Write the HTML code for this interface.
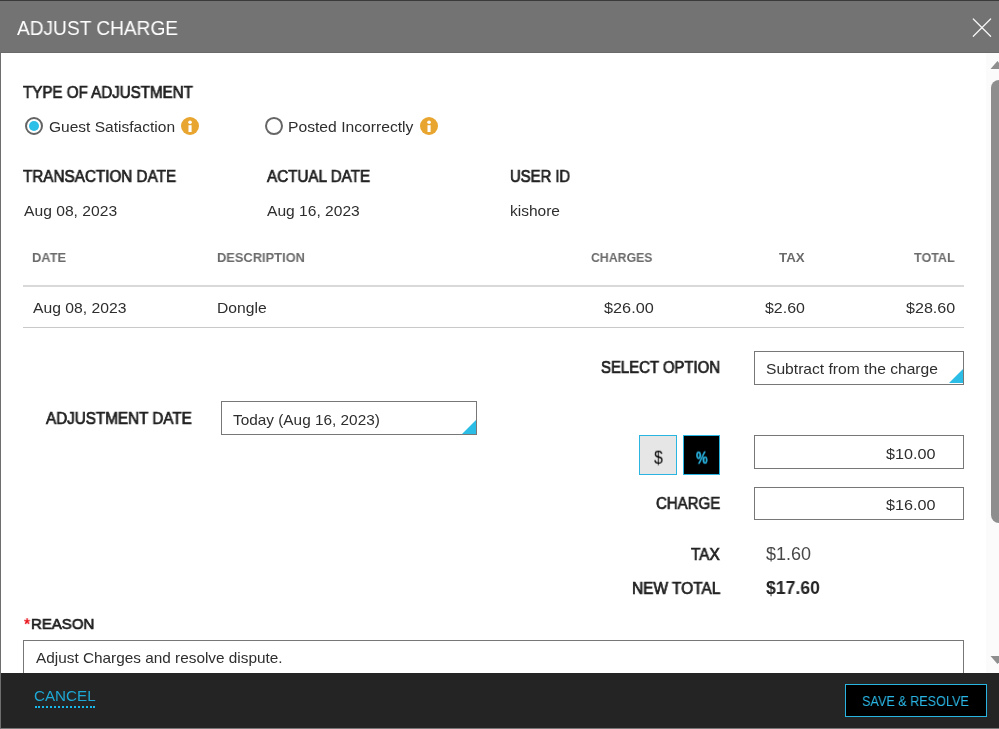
<!DOCTYPE html>
<html><head><meta charset="utf-8"><style>
*{box-sizing:border-box}
html,body{margin:0;padding:0;width:999px;height:729px;overflow:hidden;background:#fff;font-family:"Liberation Sans",sans-serif}
.t{position:absolute;white-space:pre;line-height:0;font-family:"Liberation Sans",sans-serif;transform-origin:0 0;will-change:transform}
.b{position:absolute}
</style></head><body>
<div class="b" style="left:0;top:0;width:999px;height:53px;background:#737373;border-top:1px solid #3a3a3a"></div>
<div class="b" style="left:0;top:52px;width:999px;height:1px;background:#6a6a6a"></div>
<div class="b" style="left:0;top:53px;width:1px;height:676px;background:#6e6e6e"></div>
<svg class="b" style="left:970px;top:15px" width="24" height="25" viewBox="0 0 24 25"><path d="M3.3 4 L20.6 21.3 M20.6 4 L3.3 21.3" stroke="#f6f6f6" stroke-width="1.25" stroke-linecap="round"/></svg>
<div class="b" style="left:986px;top:53px;width:13px;height:620px;background:#fbfbfb"></div>
<svg class="b" style="left:986px;top:53px" width="13" height="619"><path d="M4.5 16 L11.5 8 L18.5 16 Z" fill="#8e8e8e"/><path d="M4.5 603 L11.5 611 L18.5 603 Z" fill="#8e8e8e"/></svg>
<div class="b" style="left:991px;top:80px;width:16px;height:443px;background:#8e8e8e;border-radius:8px"></div>
<div class="b" style="left:25px;top:117px;width:18.3px;height:18.3px;border:2.6px solid #646464;border-radius:50%"></div>
<div class="b" style="left:29.3px;top:121.3px;width:10px;height:10px;background:#2cbfe7;border-radius:50%"></div>
<div class="b" style="left:265px;top:117px;width:17.8px;height:17.8px;border:2.4px solid #666;border-radius:50%"></div>
<svg class="b" style="left:181px;top:117px" width="18" height="18" viewBox="0 0 18 18"><circle cx="9" cy="9" r="9" fill="#e8a530"/><rect x="7.5" y="8.2" width="3.1" height="6.8" fill="#fff"/><circle cx="9.05" cy="5.2" r="1.8" fill="#fff"/></svg>
<svg class="b" style="left:420px;top:117px" width="18" height="18" viewBox="0 0 18 18"><circle cx="9" cy="9" r="9" fill="#e8a530"/><rect x="7.5" y="8.2" width="3.1" height="6.8" fill="#fff"/><circle cx="9.05" cy="5.2" r="1.8" fill="#fff"/></svg>
<div class="b" style="left:23px;top:285px;width:941px;height:2px;background:#d9d9d9"></div>
<div class="b" style="left:23px;top:327px;width:941px;height:1px;background:#c9c9c9"></div>
<div class="b" style="left:754px;top:351px;width:210px;height:34px;border:1px solid #777"></div>
<svg class="b" style="left:949px;top:369px" width="14" height="15"><path d="M0 14 L14 0 L14 14 Z" fill="#2cbde6"/></svg>
<div class="b" style="left:221px;top:401px;width:256px;height:34px;border:1px solid #777"></div>
<svg class="b" style="left:462px;top:420px" width="14" height="14"><path d="M0 14 L14 0 L14 14 Z" fill="#2cbde6"/></svg>
<div class="b" style="left:639px;top:435px;width:38px;height:40px;background:#e6e6e6;border:1px solid #2ab4e0"></div>
<div class="b" style="left:683px;top:435px;width:37px;height:40px;background:#000;border:1px solid #2ab4e0"></div>
<div class="b" style="left:754px;top:435px;width:210px;height:34px;border:1px solid #777"></div>
<div class="b" style="left:754px;top:487px;width:210px;height:33px;border:1px solid #777"></div>
<div class="b" style="left:23px;top:640px;width:941px;height:40px;border:1px solid #777"></div>
<div class="b" style="left:0;top:673px;width:999px;height:56px;background:#242424;border-left:1px solid #6e6e6e;border-bottom:1px solid #777"></div>
<div class="b" style="left:845px;top:684px;width:142px;height:33px;background:#000;border:1px solid #2ab4e0"></div>
<div class="b" style="left:35px;top:706px;width:60px;height:2px;border-bottom:2px dotted #18b8ea"></div>

<div class="t" style="left:17.40px;top:28.00px;font-size:19.5px;font-weight:400;color:#fff;transform:scaleX(0.9799);">ADJUST CHARGE</div>
<div class="t" style="left:23.25px;top:92.90px;font-size:16px;font-weight:400;color:#242424;transform:scaleX(0.9461);-webkit-text-stroke:0.7px #1a1a1a">TYPE OF ADJUSTMENT</div>
<div class="t" style="left:48.96px;top:126.75px;font-size:15px;font-weight:400;color:#2e2e2e;transform:scaleX(1.0354);">Guest Satisfaction</div>
<div class="t" style="left:288.36px;top:126.75px;font-size:15px;font-weight:400;color:#2e2e2e;transform:scaleX(1.0445);">Posted Incorrectly</div>
<div class="t" style="left:23.25px;top:176.75px;font-size:16px;font-weight:400;color:#242424;transform:scaleX(0.9531);-webkit-text-stroke:0.7px #1a1a1a">TRANSACTION DATE</div>
<div class="t" style="left:267.20px;top:176.75px;font-size:16px;font-weight:400;color:#242424;transform:scaleX(0.9509);-webkit-text-stroke:0.7px #1a1a1a">ACTUAL DATE</div>
<div class="t" style="left:510.27px;top:176.75px;font-size:16px;font-weight:400;color:#242424;transform:scaleX(0.9270);-webkit-text-stroke:0.7px #1a1a1a">USER ID</div>
<div class="t" style="left:23.50px;top:210.75px;font-size:15px;font-weight:400;color:#2e2e2e;transform:scaleX(1.0438);">Aug 08, 2023</div>
<div class="t" style="left:267.40px;top:210.75px;font-size:15px;font-weight:400;color:#2e2e2e;transform:scaleX(1.0393);">Aug 16, 2023</div>
<div class="t" style="left:510.37px;top:210.75px;font-size:15px;font-weight:400;color:#2e2e2e;transform:scaleX(1.0340);">kishore</div>
<div class="t" style="left:32.03px;top:257.75px;font-size:13.3px;font-weight:700;color:#6b6b6b;transform:scaleX(0.9706);">DATE</div>
<div class="t" style="left:216.53px;top:257.75px;font-size:13.3px;font-weight:700;color:#6b6b6b;transform:scaleX(0.9674);">DESCRIPTION</div>
<div class="t" style="left:591.20px;top:257.75px;font-size:13.3px;font-weight:700;color:#6b6b6b;transform:scaleX(0.9250);">CHARGES</div>
<div class="t" style="left:778.90px;top:257.75px;font-size:13.3px;font-weight:700;color:#6b6b6b;transform:scaleX(0.9960);">TAX</div>
<div class="t" style="left:914.00px;top:257.75px;font-size:13.3px;font-weight:700;color:#6b6b6b;transform:scaleX(0.9442);">TOTAL</div>
<div class="t" style="left:32.50px;top:307.75px;font-size:15px;font-weight:400;color:#2e2e2e;transform:scaleX(1.0472);">Aug 08, 2023</div>
<div class="t" style="left:216.96px;top:307.75px;font-size:15px;font-weight:400;color:#2e2e2e;transform:scaleX(1.0435);">Dongle</div>
<div class="t" style="left:604.00px;top:307.75px;font-size:15px;font-weight:400;color:#2e2e2e;transform:scaleX(1.0844);">$26.00</div>
<div class="t" style="left:764.50px;top:307.75px;font-size:15px;font-weight:400;color:#2e2e2e;transform:scaleX(1.0622);">$2.60</div>
<div class="t" style="left:906.10px;top:307.75px;font-size:15px;font-weight:400;color:#2e2e2e;transform:scaleX(1.0733);">$28.60</div>
<div class="t" style="left:601.07px;top:368.00px;font-size:16px;font-weight:400;color:#242424;transform:scaleX(0.9317);-webkit-text-stroke:0.7px #1a1a1a">SELECT OPTION</div>
<div class="t" style="left:765.76px;top:368.60px;font-size:15px;font-weight:400;color:#2e2e2e;transform:scaleX(1.0415);">Subtract from the charge</div>
<div class="t" style="left:46.00px;top:419.00px;font-size:16px;font-weight:400;color:#242424;transform:scaleX(0.9516);-webkit-text-stroke:0.7px #1a1a1a">ADJUSTMENT DATE</div>
<div class="t" style="left:232.90px;top:419.90px;font-size:15px;font-weight:400;color:#2e2e2e;transform:scaleX(1.0238);">Today (Aug 16, 2023)</div>
<div class="t" style="left:886.00px;top:453.60px;font-size:15px;font-weight:400;color:#2e2e2e;transform:scaleX(1.0778);">$10.00</div>
<div class="t" style="left:655.86px;top:504.20px;font-size:16px;font-weight:400;color:#242424;transform:scaleX(0.9388);-webkit-text-stroke:0.7px #1a1a1a">CHARGE</div>
<div class="t" style="left:886.00px;top:504.60px;font-size:15px;font-weight:400;color:#2e2e2e;transform:scaleX(1.0778);">$16.00</div>
<div class="t" style="left:691.20px;top:555.10px;font-size:16px;font-weight:400;color:#242424;transform:scaleX(0.9600);-webkit-text-stroke:0.7px #1a1a1a">TAX</div>
<div class="t" style="left:766.10px;top:553.80px;font-size:18px;font-weight:400;color:#484848;transform:scaleX(1.0000);">$1.60</div>
<div class="t" style="left:631.84px;top:588.60px;font-size:16px;font-weight:400;color:#242424;transform:scaleX(0.9644);-webkit-text-stroke:0.7px #1a1a1a">NEW TOTAL</div>
<div class="t" style="left:766.10px;top:587.90px;font-size:18px;font-weight:700;color:#242424;transform:scaleX(0.9800);">$17.60</div>
<div class="t" style="left:31.03px;top:623.90px;font-size:15.5px;font-weight:400;color:#242424;transform:scaleX(0.9667);-webkit-text-stroke:0.7px #1a1a1a">REASON</div>
<div class="t" style="left:36.10px;top:657.80px;font-size:15px;font-weight:400;color:#2e2e2e;transform:scaleX(1.0233);">Adjust Charges and resolve dispute.</div>
<div class="t" style="left:33.89px;top:695.90px;font-size:15px;font-weight:400;color:#1ea8d5;transform:scaleX(1.0133);">CANCEL</div>
<div class="t" style="left:862.16px;top:700.80px;font-size:15px;font-weight:400;color:#2ab6e4;transform:scaleX(0.8413);">SAVE &amp; RESOLVE</div>
<div class="t" style="left:23.90px;top:624.57px;font-size:17px;font-weight:700;color:#e8101a;transform:scale(0.9143,0.9667);">*</div>
<div class="t" style="left:654.00px;top:456.73px;font-size:18.5px;font-weight:400;color:#000;transform:scale(0.8500,1.0333);">$</div>
<div class="t" style="left:695.50px;top:457.25px;font-size:16.5px;font-weight:700;color:#2ab8e6;transform:scale(0.8000,1.0417);-webkit-text-stroke:0.35px #2ab8e6">%</div>
</body></html>
